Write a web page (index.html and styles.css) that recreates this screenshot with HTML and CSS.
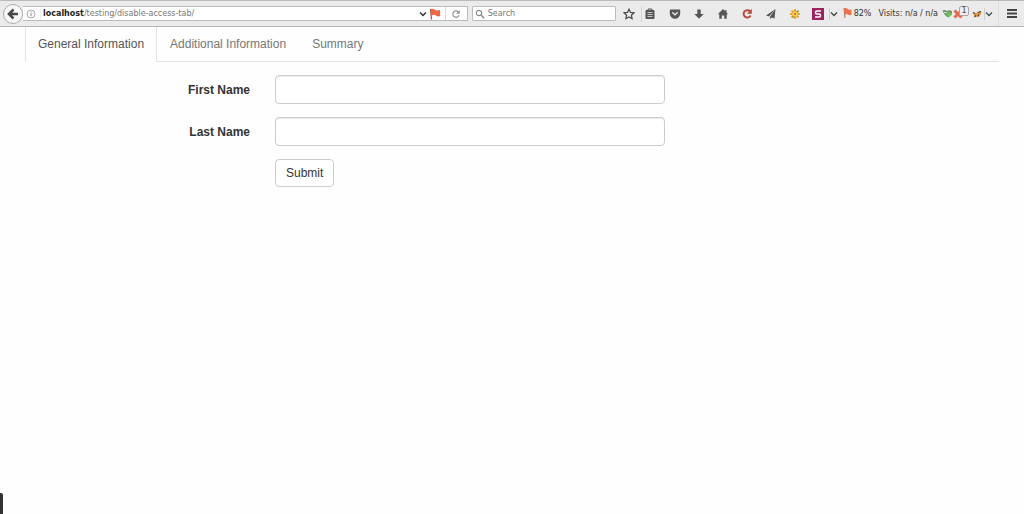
FILE: index.html
```html
<!DOCTYPE html>
<html lang="en">
<head>
  <meta charset="UTF-8" />
  <meta name="viewport" content="width=device-width, initial-scale=1.0"/>
  <title>Disable Access Tab</title>
  <link rel="stylesheet" href="styles.css">
</head>
<body>
  <header class="toolbar">
    <button class="back" type="button" aria-label="Back">
      <svg width="12" height="12" viewBox="0 0 12 12"><path d="M6.5 1.5L2 6l4.5 4.5M2.5 6H11" fill="none" stroke="#484848" stroke-width="2.6"/></svg>
    </button>
    <div class="url-bar">
      <svg width="10" height="10" viewBox="0 0 10 10"><circle cx="5" cy="5" r="4" fill="none" stroke="#aaa"/><path d="M5 4.3v3M5 2.5v1" stroke="#888"/></svg>
      <div class="url"><b>localhost</b>/testing/disable-access-tab/</div>
      <svg width="8" height="8" viewBox="0 0 8 8"><path d="M1 2.5l3 3 3-3" fill="none" stroke="#333" stroke-width="1.5"/></svg>
      <svg width="12" height="12" viewBox="0 0 12 12"><path d="M1.500 1l1 10.500" stroke="#a54b32" stroke-width="1.200"/><path d="M1.500 1.200Q4 0 5.500 1.500T11 2l.300 6Q9 9 7 7.500T2.300 8z" fill="#ee6848"/></svg>
      <button class="reload" type="button" aria-label="Reload">
        <svg width="10" height="10" viewBox="0 0 10 10"><path d="M7.500 3A3.200 3.200 0 1 0 8 6.300" fill="none" stroke="#999" stroke-width="1.300"/><path d="M8.800 1v3.800H5z" fill="#999"/></svg>
      </button>
    </div>
    <div class="search">
      <svg width="10" height="10" viewBox="0 0 10 10"><circle cx="4" cy="4" r="2.700" fill="none" stroke="#888" stroke-width="1.200"/><path d="M6 6l3.200 3.200" stroke="#888" stroke-width="1.500"/></svg>
      <input type="text" placeholder="Search" aria-label="Search">
    </div>
    <div class="icons">
      <button type="button" aria-label="Bookmark"><svg width="12" height="12" viewBox="0 0 12 12"><path d="M6 1.200l1.500 3.200 3.500.4-2.600 2.400.7 3.500L6 9l-3.100 1.700.7-3.500L1 4.800l3.500-.4z" fill="none" stroke="#484848" stroke-width="1.200"/></svg></button>
      <button class="divided" type="button" aria-label="Library"><svg width="12" height="12" viewBox="0 0 12 12"><path d="M4 2.500V1h4v1.500" fill="none" stroke="#555"/><rect x="1.500" y="2" width="9" height="9" rx="1" fill="#555"/><path d="M3.500 4.500h5M3.500 6.500h5M3.500 8.500h5" stroke="#c4c4c4"/></svg></button>
      <button type="button" aria-label="Pocket"><svg width="12" height="12" viewBox="0 0 12 12"><path d="M1.500 1.500h9q.7 0 .7.700V5.500a5.200 5.200 0 0 1-10.400 0V2.200q0-.7.7-.7z" fill="#555"/><path d="M3.300 4.300L6 6.900l2.700-2.600" fill="none" stroke="#eee" stroke-width="1.400"/></svg></button>
      <button type="button" aria-label="Downloads"><svg width="12" height="12" viewBox="0 0 12 12"><path d="M4.300 1.500h3.400V6h3L6 10.800 1.300 6h3z" fill="#555"/></svg></button>
      <button type="button" aria-label="Home"><svg width="12" height="12" viewBox="0 0 12 12"><path d="M6 1L.8 6.300h1.500v4.500h2.500V7.500h2.400v3.300h2.500V6.300h1.500L9.500 4.500V2H8.300v1.300z" fill="#555"/></svg></button>
      <button type="button" aria-label="Restart"><svg width="12" height="12" viewBox="0 0 12 12"><path d="M9 3.300A3.700 3.700 0 1 0 9.600 7.500" fill="none" stroke="#b64a3c" stroke-width="2"/><path d="M10.800.8v5H5.900z" fill="#b64a3c"/></svg></button>
      <button type="button" aria-label="Send"><svg width="12" height="12" viewBox="0 0 12 12"><path d="M10.500 1L1 7.500l3 1zM10.500 1L5 8.700v2.500l1.600-1.700 2.900 1z" fill="#555"/></svg></button>
      <button type="button" aria-label="Extension"><svg width="12" height="12" viewBox="0 0 12 12"><path d="M6 1v10M1 6h10M2.500 2.500l7 7M9.500 2.500l-7 7" stroke="#e6a53a" stroke-width="2"/><circle cx="6" cy="6" r="2.600" fill="#f3cf4a"/><path d="M3.500 9.500l1.500-1M8 4l1.500-1" stroke="#6e9a45" stroke-width="1.500"/><circle cx="6" cy="6" r="1" fill="#c06a2c"/></svg></button>
      <button class="last" type="button" aria-label="Stylish"><svg width="12" height="12" viewBox="0 0 12 12"><rect width="12" height="12" fill="#9c2360"/><path d="M9 3H4.800Q3.500 3 3.500 4.400T4.800 6h2.400q1.300 0 1.300 1.500T7.200 9H3" fill="none" stroke="#fff" stroke-width="1.600"/></svg></button>
    </div>
    <div class="status">
      <svg class="more" width="10" height="12" viewBox="0 0 10 12"><path d="M.5 0v12" stroke="#ccc"/><path d="M2 4.500l3 3 3-3" fill="none" stroke="#444" stroke-width="1.300"/></svg>
      <svg class="flag" width="9" height="12" viewBox="0 0 9 12"><path d="M1 0l1 10" stroke="#a96b4a"/><path d="M1 .5Q3-.5 4.500 .8T8.500 1.500v5.500Q6 7.500 5 6.500T2 6.500z" fill="#ef704c"/></svg>
      <span class="percent">82%</span>
      <span class="visits">Visits: n/a / n/a</span>
      <svg width="11" height="10" viewBox="0 0 11 10"><path d="M.5 1.500Q3 .5 5 2q3-1.500 5 .5 1 3-4 6Q2.500 6.500.5 1.500z" fill="#6e9169"/><path d="M2 3.500h3" stroke="#d5e2d0"/><path d="M4.500 5.500h5M7 3v5" stroke="#71c454" stroke-width="2"/></svg>
      <div class="blocked">
        <svg width="10" height="10" viewBox="0 0 10 10"><path d="M1.500 1.500l7 7M8.500 1.500l-7 7" stroke="#e56850" stroke-width="3"/></svg>
        <span class="badge">1</span>
      </div>
      <svg class="pen" width="10" height="10" viewBox="0 0 10 10"><path d="M1 4l3 .5L8.500 2l1 2-1.500 2.500-3 1.500-2.500-.5z" fill="#e8943d"/><path d="M.8 3.500l2.500 1M5.500 3.500L9 2.500M2.500 8l1.500-1.500M6.500 7.500V5.500" stroke="#574234" stroke-width="1.200"/></svg>
      <svg class="more" width="10" height="12" viewBox="0 0 10 12"><path d="M.5 0v12" stroke="#ccc"/><path d="M2 4.500l3 3 3-3" fill="none" stroke="#3d4f60" stroke-width="1.300"/></svg>
    </div>
    <button class="menu" type="button" aria-label="Menu">
      <svg width="10" height="10" viewBox="0 0 10 10"><path d="M0 1h10M0 4.500h10M0 8h10" stroke="#444" stroke-width="1.800"/></svg>
    </button>
  </header>

  <main class="container">
    <nav class="tabs">
      <a class="active" href="#general">General Information</a>
      <a href="#additional">Additional Information</a>
      <a href="#summary">Summary</a>
    </nav>

    <form class="form" id="general">
      <label for="firstName">First Name</label>
      <input type="text" id="firstName">

      <label for="lastName">Last Name</label>
      <input type="text" id="lastName">

      <button type="submit">Submit</button>
    </form>
  </main>

  <div class="edge-handle"></div>
</body>
</html>
```

FILE: styles.css
```css
* {
  box-sizing: border-box;
}
body {
  margin: 0;
  background-color: #fefefe;
  color: #333;
  font-family: "Liberation Sans", Arial, sans-serif;
  font-size: 12px;
}
svg {
  display: block;
  flex: none;
}
button {
  padding: 0;
  border: none;
  background: none;
  font: inherit;
  color: inherit;
  cursor: pointer;
}

/* browser toolbar */
.toolbar {
  display: flex;
  align-items: center;
  height: 27px;
  padding-left: 3px;
  background-color: #ebebeb;
  border-top: 1px solid #bbb;
  border-bottom: 1px solid #b5b5b5;
  font-family: "DejaVu Sans", sans-serif;
  font-size: 8px;
}
.back {
  display: flex;
  align-items: center;
  justify-content: center;
  width: 20px;
  height: 20px;
  background-color: #f8f8f8;
  border: 1px solid #aaa;
  border-radius: 50%;
}
.url-bar,
.search {
  display: flex;
  align-items: center;
  height: 15px;
  background-color: #fff;
  border: 1px solid #bbb;
}
.url-bar {
  flex: 1;
  gap: 2px;
  border-left: none;
  padding-left: 3px;
}
.url {
  flex: 1;
  margin-left: 2px;
  padding-left: 2px;
  border-left: 1px solid #eee;
  color: #777;
  line-height: 13px;
}
.url b {
  color: #222;
}
.reload {
  display: flex;
  align-items: center;
  justify-content: center;
  width: 22px;
  height: 13px;
  margin-left: 2px;
  border-left: 1px solid #ddd;
}
.search {
  width: 144px;
  margin-left: 4px;
  padding-left: 2px;
  border-radius: 1px;
}
.search input {
  width: 100%;
  min-width: 0;
  height: 13px;
  padding: 0 3px;
  border: none;
  outline: none;
  background: none;
  font: inherit;
}
.search input::placeholder {
  color: #777;
}
.icons,
.status {
  display: flex;
  align-items: center;
}
.icons {
  margin-left: 1px;
}
.icons button {
  display: flex;
  align-items: center;
  justify-content: center;
  width: 24px;
  height: 16px;
}
.icons .divided {
  width: 22px;
  padding-right: 4px;
  border-left: 1px solid #d6d6d6;
}
.icons .last {
  width: 22px;
}
.status {
  color: #333;
}
.flag {
  margin-right: 2px;
}
.percent {
  margin-right: 7px;
}
.visits {
  margin-right: 4px;
}
.pen {
  margin-right: 2px;
}
.status .more {
  margin-right: 4px;
}
.blocked {
  position: relative;
  width: 19px;
}
.badge {
  position: absolute;
  top: -3px;
  left: 6px;
  width: 10px;
  height: 10px;
  background-color: #eee;
  border: 1px solid #b4a0a8;
  border-radius: 2px;
  color: #444;
  font-size: 8px;
  line-height: 8px;
  text-align: center;
}
.menu {
  display: flex;
  align-items: center;
  justify-content: center;
  width: 26px;
  height: 25px;
  border-left: 1px solid #ddd;
}

/* page */
.container {
  padding: 0 25px;
}
.tabs {
  display: flex;
  border-bottom: 1px solid #e2e2e2;
}
.tabs a {
  height: 34px;
  margin-bottom: -1px;
  padding: 0 12px;
  border: 1px solid transparent;
  border-top: none;
  color: #777;
  line-height: 35px;
  text-decoration: none;
}
.tabs a.active {
  height: 35px;
  background-color: #fefefe;
  border-color: #e2e2e2;
  border-bottom-color: #fefefe;
  color: #555;
}
.form {
  display: grid;
  grid-template-columns: 225px 40%;
  column-gap: 25px;
  row-gap: 13px;
  align-items: center;
  margin-top: 13px;
}
.form label {
  font-weight: bold;
  text-align: right;
}
.form input {
  width: 100%;
  height: 29px;
  padding: 5px 10px;
  background-color: #fff;
  border: 1px solid #ccc;
  border-radius: 4px;
  box-shadow: inset 0 1px 1px rgba(0, 0, 0, 0.08);
  font: inherit;
}
.form button {
  grid-column: 2;
  justify-self: start;
  height: 28px;
  padding: 0 10px;
  background-color: #fff;
  border: 1px solid #ccc;
  border-radius: 4px;
}
.edge-handle {
  position: fixed;
  left: 0;
  bottom: 0;
  width: 3px;
  height: 21px;
  background-color: #333;
  border-top-right-radius: 2px;
}
```
